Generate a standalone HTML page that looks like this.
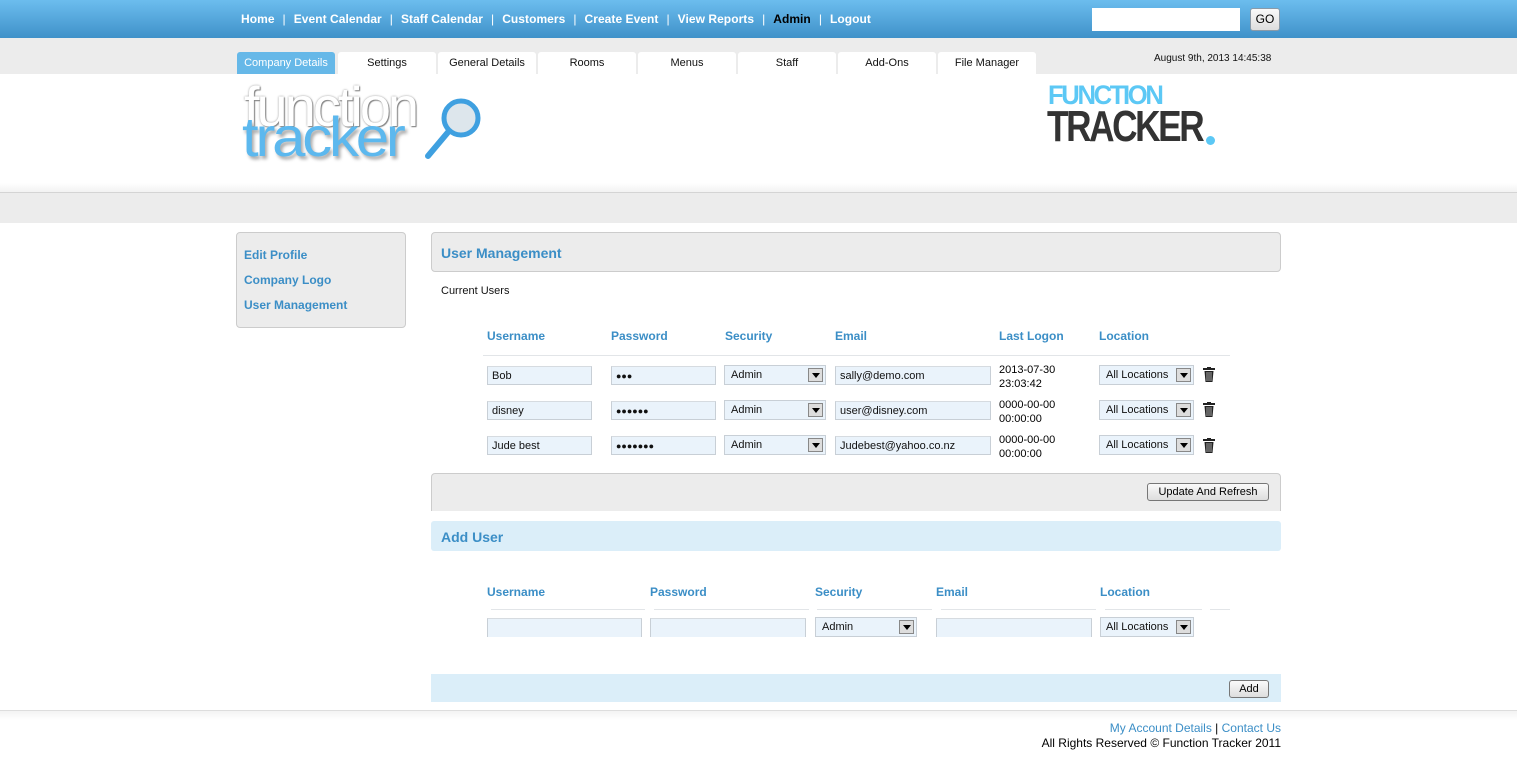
<!DOCTYPE html>
<html><head><meta charset="utf-8">
<style>
*{margin:0;padding:0;box-sizing:border-box}
body{width:1517px;height:760px;position:relative;background:#fff;font-family:"Liberation Sans",Arial,sans-serif;overflow:hidden}
.a{position:absolute;white-space:nowrap}
.top{left:0;top:0;width:1517px;height:38px;background:linear-gradient(#6cbdee,#3f91c9)}
.nav{left:241px;top:12px;font-size:12px;font-weight:bold;color:#fff;letter-spacing:0.05px}
.nav span{margin:0 8px;font-weight:normal}
.tab{top:52px;height:22px;width:98px;background:#fff;font-size:11px;text-align:center;line-height:22px;color:#111;border-radius:3px 3px 0 0}
.lnk{color:#3b8ec6;font-weight:bold;font-size:12px}
.h{color:#3b8ec6;font-weight:bold;font-size:12px}
.in{height:19px;background:#eaf3fb;border:1px solid #c8cfd6;border-top-color:#d6dbe0;font-size:11px;line-height:18px;padding-left:4px;color:#111}
.sel{height:20px;background:#eaf3fb;border:1px solid #c8cfd6;font-size:11px;line-height:19px;padding-left:6px;color:#111}
.sel i{position:absolute;right:2px;top:2px;width:15px;height:14px;background:#ddd;border:1px solid #888;}
.sel i:after{content:"";position:absolute;left:3px;top:4px;border:4px solid transparent;border-top:5px solid #000;border-bottom:0}
.btn{height:18px;border:1px solid #777;border-radius:3px;background:linear-gradient(#fafafa,#ddd);font-size:11px;text-align:center;line-height:16px;color:#000}
.ln{height:1px;background:#e2e5e8}
.tr{width:12px;height:15px}
</style></head><body>
<div class="a top"></div>
<div class="a nav">Home<span>|</span>Event Calendar<span>|</span>Staff Calendar<span>|</span>Customers<span>|</span>Create Event<span>|</span>View Reports<span>|</span><b style="color:#000">Admin</b><span>|</span>Logout</div>
<div class="a" style="left:1092px;top:8px;width:148px;height:23px;background:#fff"></div>
<div class="a btn" style="left:1250px;top:8px;width:30px;height:23px;line-height:21px;font-size:12px;border-color:#8a9aa8">GO</div>
<div class="a" style="left:0;top:38px;width:1517px;height:36px;background:#ececec"></div>
<div class="a tab" style="left:237px;background:#66b8e8;color:#fff">Company Details</div>
<div class="a tab" style="left:338px">Settings</div>
<div class="a tab" style="left:438px">General Details</div>
<div class="a tab" style="left:538px">Rooms</div>
<div class="a tab" style="left:638px">Menus</div>
<div class="a tab" style="left:738px">Staff</div>
<div class="a tab" style="left:838px">Add-Ons</div>
<div class="a tab" style="left:938px">File Manager</div>
<div class="a" style="left:1154px;top:53px;font-size:10px;color:#111">August 9th, 2013 14:45:38</div>
<!-- logo left -->
<div class="a" style="left:244px;top:74px;font-size:56px;color:#fff;letter-spacing:-3px;text-shadow:0 0 2px #999,1px 1px 1px #777;transform:scaleX(1.0);transform-origin:left">function</div>
<div class="a" style="left:242px;top:104px;font-size:56px;color:#5cb8ee;letter-spacing:-3px;text-shadow:2px 3px 3px #aaa;transform:scaleX(1.07);transform-origin:left">tracker</div>
<svg class="a" style="left:420px;top:96px" width="66" height="64"><circle cx="41" cy="22" r="17" fill="#dde6ec" stroke="#3fa0e0" stroke-width="5"/><line x1="29" y1="35" x2="8" y2="60" stroke="#3fa0e0" stroke-width="6" stroke-linecap="round"/></svg>
<!-- logo right -->
<div class="a" style="left:1048px;top:80px;font-size:27px;font-weight:bold;color:#5cc8f5;letter-spacing:-2.5px;transform:scaleX(0.95);transform-origin:left">FUNCTION</div>
<div class="a" style="left:1047px;top:102px;font-size:44px;font-weight:bold;color:#333;letter-spacing:-3px;transform:scaleX(0.8);transform-origin:left">TRACKER</div>
<div class="a" style="left:1206px;top:136px;width:9px;height:9px;border-radius:50%;background:#5cc8f5"></div>
<div class="a" style="left:0;top:183px;width:1517px;height:10px;background:linear-gradient(#fff,#f1f1f1)"></div>
<div class="a" style="left:0;top:192px;width:1517px;height:31px;background:#ececec;border-top:1px solid #d4d4d4"></div>
<!-- sidebar -->
<div class="a" style="left:236px;top:232px;width:170px;height:96px;background:#ececec;border:1px solid #ccc;border-radius:4px"></div>
<div class="a lnk" style="left:244px;top:248px">Edit Profile</div>
<div class="a lnk" style="left:244px;top:273px">Company Logo</div>
<div class="a lnk" style="left:244px;top:298px">User Management</div>
<!-- user mgmt -->
<div class="a" style="left:431px;top:232px;width:850px;height:40px;background:#ececec;border:1px solid #ccc;border-radius:4px"></div>
<div class="a" style="left:441px;top:245px;font-size:14px;font-weight:bold;color:#3b8ec6">User Management</div>
<div class="a" style="left:441px;top:285px;font-size:11px;color:#111">Current Users</div>
<div class="a h" style="left:487px;top:329px">Username</div>
<div class="a h" style="left:611px;top:329px">Password</div>
<div class="a h" style="left:725px;top:329px">Security</div>
<div class="a h" style="left:835px;top:329px">Email</div>
<div class="a h" style="left:999px;top:329px">Last Logon</div>
<div class="a h" style="left:1099px;top:329px">Location</div>
<div class="a ln" style="left:483px;top:355px;width:747px"></div>

<div class="a in" style="left:487px;top:366px;width:105px">Bob</div>
<div class="a in" style="left:611px;top:366px;width:105px;font-size:9px">●●●</div>
<div class="a sel" style="left:724px;top:365px;width:102px">Admin<i></i></div>
<div class="a in" style="left:835px;top:366px;width:156px">sally@demo.com</div>
<div class="a" style="left:999px;top:363px;font-size:11px;line-height:14px">2013-07-30<br>23:03:42</div>
<div class="a sel" style="left:1099px;top:365px;width:95px;padding-left:6px">All Locations<i></i></div>

<div class="a in" style="left:487px;top:401px;width:105px">disney</div>
<div class="a in" style="left:611px;top:401px;width:105px;font-size:9px">●●●●●●</div>
<div class="a sel" style="left:724px;top:400px;width:102px">Admin<i></i></div>
<div class="a in" style="left:835px;top:401px;width:156px">user@disney.com</div>
<div class="a" style="left:999px;top:398px;font-size:11px;line-height:14px">0000-00-00<br>00:00:00</div>
<div class="a sel" style="left:1099px;top:400px;width:95px">All Locations<i></i></div>

<div class="a in" style="left:487px;top:436px;width:105px">Jude best</div>
<div class="a in" style="left:611px;top:436px;width:105px;font-size:9px">●●●●●●●</div>
<div class="a sel" style="left:724px;top:435px;width:102px">Admin<i></i></div>
<div class="a in" style="left:835px;top:436px;width:156px">Judebest@yahoo.co.nz</div>
<div class="a" style="left:999px;top:433px;font-size:11px;line-height:14px">0000-00-00<br>00:00:00</div>
<div class="a sel" style="left:1099px;top:435px;width:95px">All Locations<i></i></div>

<svg class="a tr" style="left:1203px;top:367px" viewBox="0 0 12 15"><rect x="0" y="1" width="12" height="2" fill="#222"/><rect x="4" y="0" width="4" height="1.5" fill="#222"/><path d="M1.5 4h9l-1 11h-7z" fill="#222"/><path d="M4 5v9M6 5v9M8 5v9" stroke="#fff" stroke-width=".6"/></svg>
<svg class="a tr" style="left:1203px;top:402px" viewBox="0 0 12 15"><rect x="0" y="1" width="12" height="2" fill="#222"/><rect x="4" y="0" width="4" height="1.5" fill="#222"/><path d="M1.5 4h9l-1 11h-7z" fill="#222"/><path d="M4 5v9M6 5v9M8 5v9" stroke="#fff" stroke-width=".6"/></svg>
<svg class="a tr" style="left:1203px;top:438px" viewBox="0 0 12 15"><rect x="0" y="1" width="12" height="2" fill="#222"/><rect x="4" y="0" width="4" height="1.5" fill="#222"/><path d="M1.5 4h9l-1 11h-7z" fill="#222"/><path d="M4 5v9M6 5v9M8 5v9" stroke="#fff" stroke-width=".6"/></svg>

<div class="a" style="left:431px;top:473px;width:850px;height:38px;background:#ececec;border:1px solid #ccc;border-bottom:none;border-radius:4px 4px 0 0"></div>
<div class="a btn" style="left:1147px;top:483px;width:122px">Update And Refresh</div>

<div class="a" style="left:431px;top:521px;width:850px;height:30px;background:#dbeef9;border-radius:3px"></div>
<div class="a" style="left:441px;top:529px;font-size:14px;font-weight:bold;color:#3b8ec6">Add User</div>
<div class="a h" style="left:487px;top:585px">Username</div>
<div class="a h" style="left:650px;top:585px">Password</div>
<div class="a h" style="left:815px;top:585px">Security</div>
<div class="a h" style="left:936px;top:585px">Email</div>
<div class="a h" style="left:1100px;top:585px">Location</div>
<div class="a ln" style="left:491px;top:609px;width:154px"></div>
<div class="a ln" style="left:654px;top:609px;width:155px"></div>
<div class="a ln" style="left:817px;top:609px;width:115px"></div>
<div class="a ln" style="left:941px;top:609px;width:155px"></div>
<div class="a ln" style="left:1105px;top:609px;width:97px"></div>
<div class="a ln" style="left:1210px;top:609px;width:20px"></div>
<div class="a in" style="left:487px;top:618px;width:155px;border-bottom:none"></div>
<div class="a in" style="left:650px;top:618px;width:156px;border-bottom:none"></div>
<div class="a sel" style="left:815px;top:617px;width:102px">Admin<i></i></div>
<div class="a in" style="left:936px;top:618px;width:156px;border-bottom:none"></div>
<div class="a sel" style="left:1100px;top:617px;width:94px;padding-left:5px">All Locations<i></i></div>

<div class="a" style="left:431px;top:674px;width:850px;height:28px;background:#dbeef9"></div>
<div class="a btn" style="left:1229px;top:680px;width:40px">Add</div>

<div class="a" style="left:0;top:710px;width:1517px;height:10px;border-top:1px solid #ddd;background:linear-gradient(#f3f3f3,#fff)"></div>
<div class="a" style="right:236px;top:721px;font-size:12px;color:#3b8ec6">My Account Details <span style="color:#000">|</span> Contact Us</div>
<div class="a" style="right:236px;top:736px;font-size:12px;color:#000">All Rights Reserved © Function Tracker 2011</div>
</body></html>
